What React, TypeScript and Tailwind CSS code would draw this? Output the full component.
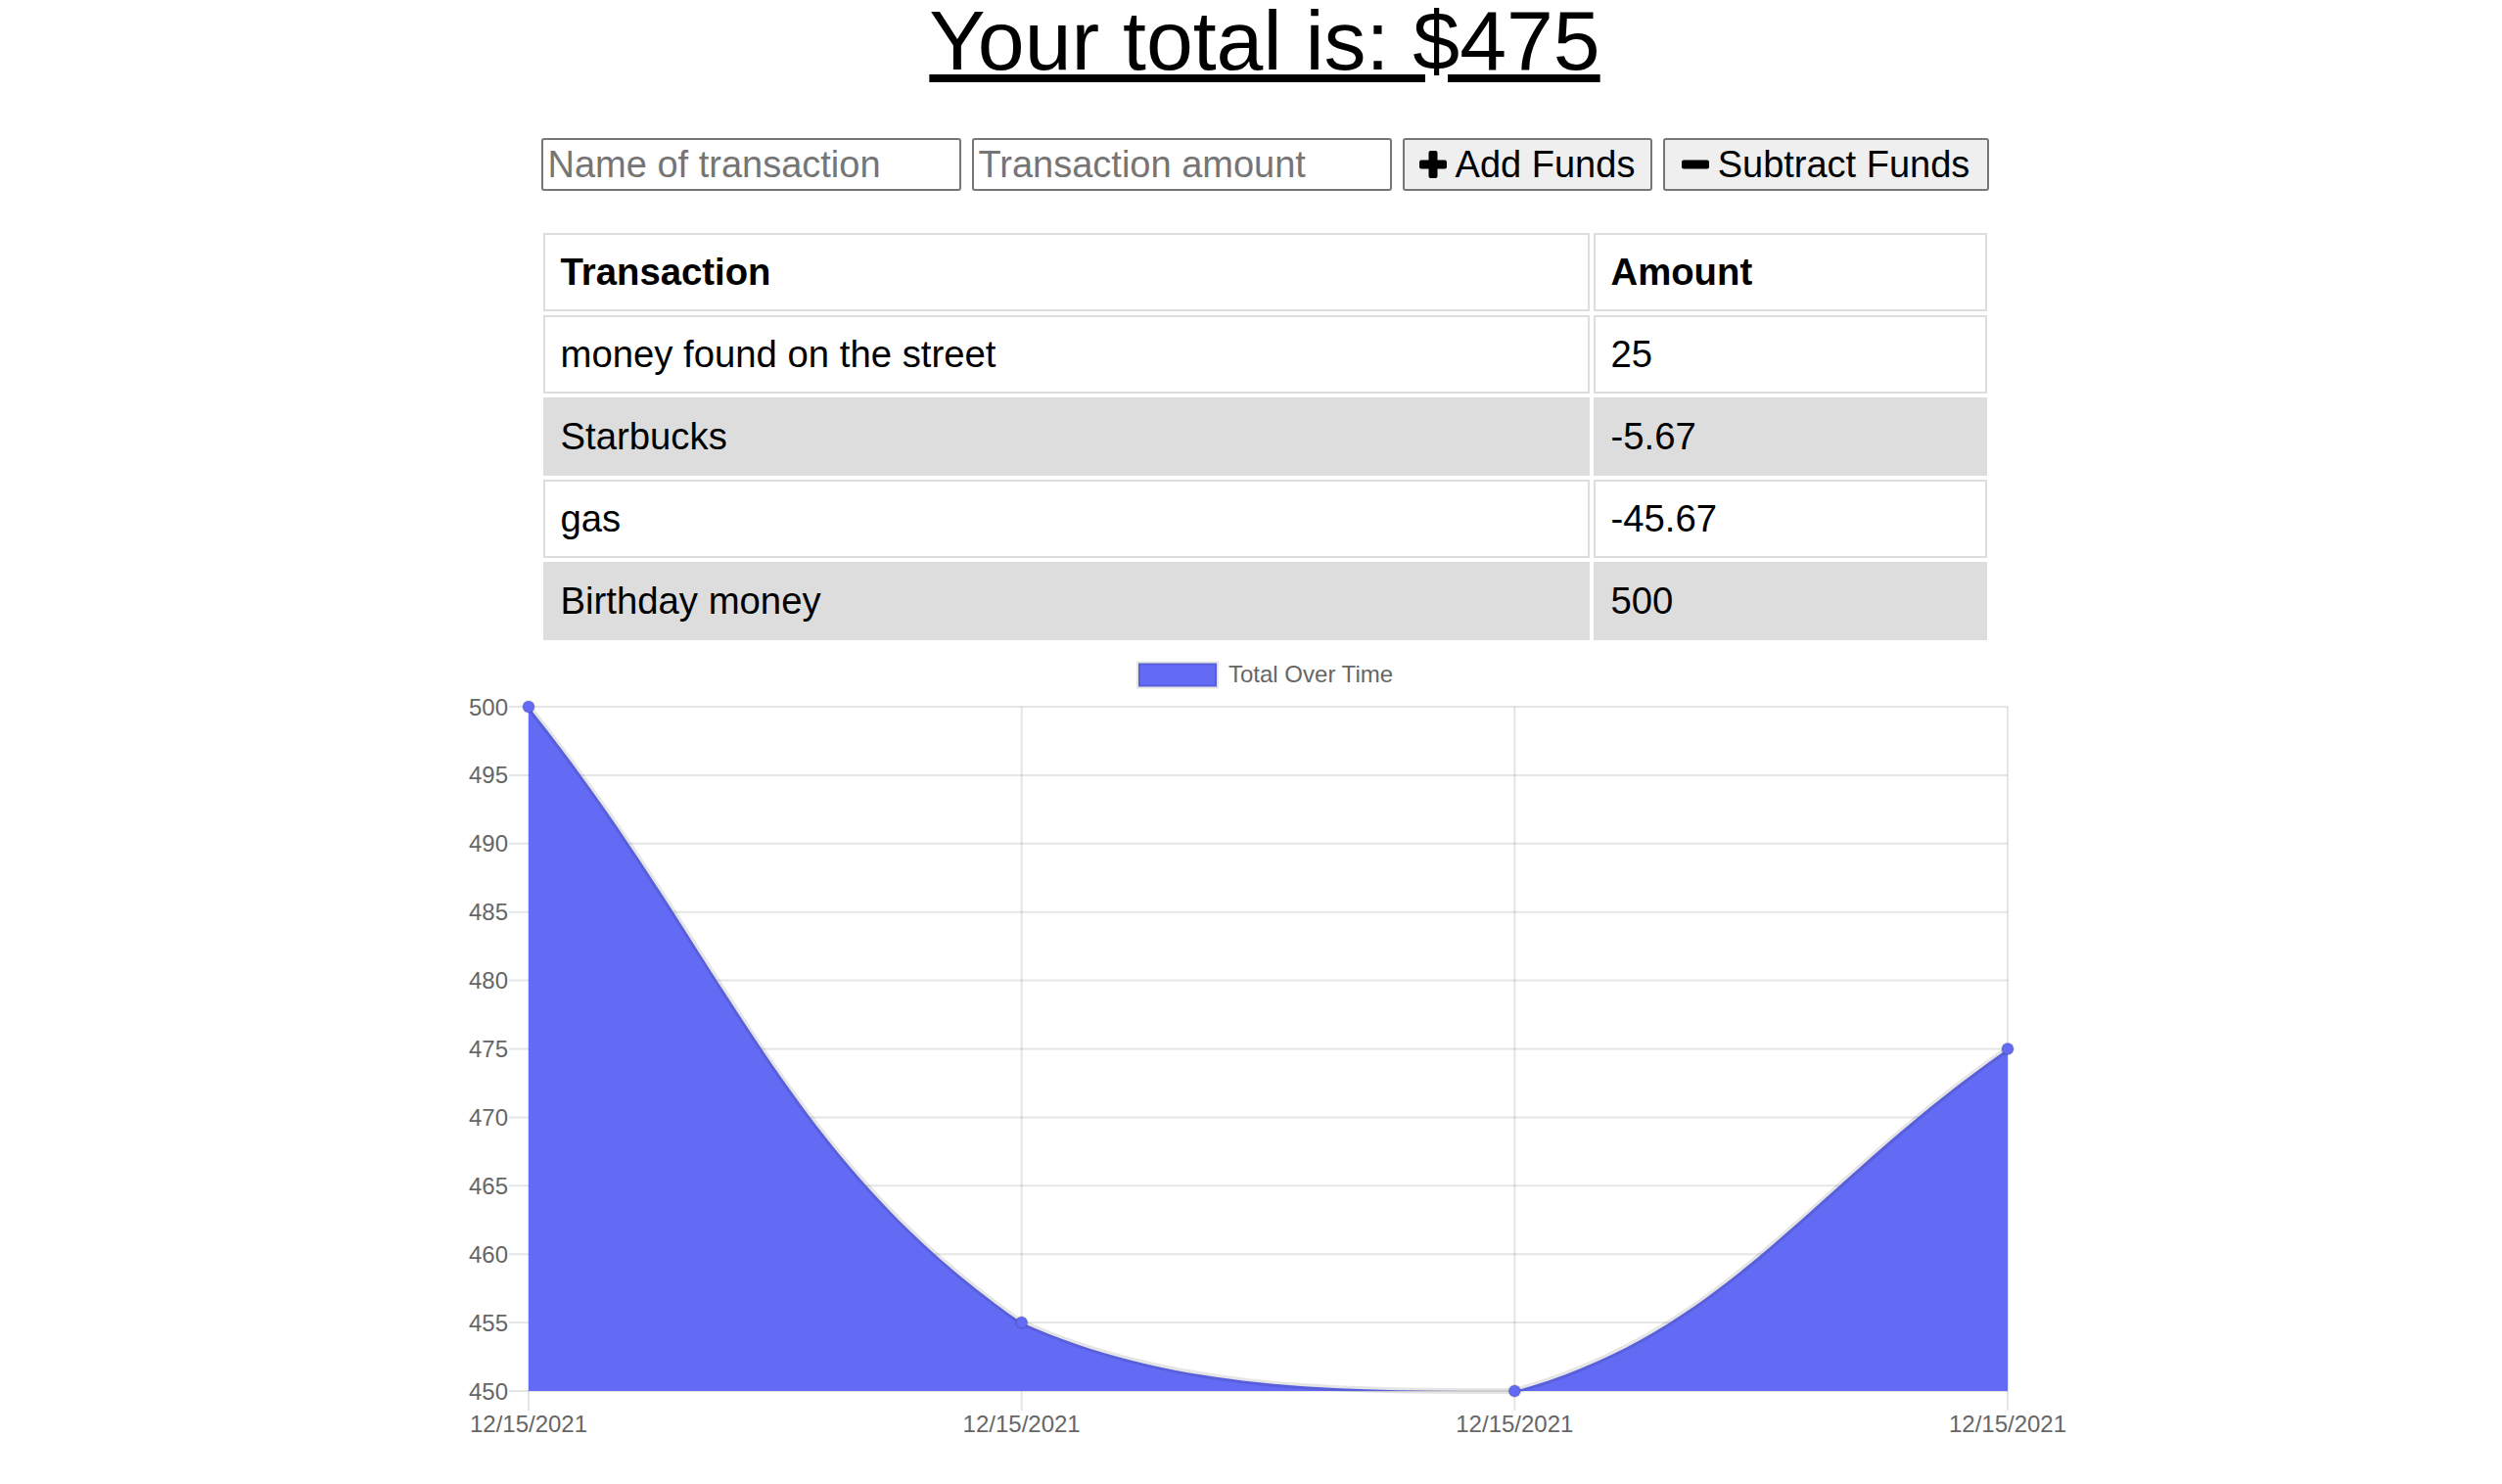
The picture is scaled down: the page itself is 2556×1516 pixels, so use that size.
import React from 'react';

const rows = [
  { name: 'money found on the street', amount: '25' },
  { name: 'Starbucks', amount: '-5.67' },
  { name: 'gas', amount: '-45.67' },
  { name: 'Birthday money', amount: '500' },
];

const values = [500, 455, 450, 475];
const xs = [540, 1043.67, 1547.33, 2051];
const yOf = (v: number) => 1421 - ((v - 450) / 5) * 69.9;
const FILL = '#636af4';
const GRID = 'rgba(0,0,0,0.1)';

const PlusIcon = () => (
  <svg viewBox="0 0 28 28" className="h-[28px] w-[28px] shrink-0" fill="currentColor">
    <rect x={9.5} y={0} width={9} height={28} rx={2} />
    <rect x={0} y={9.5} width={28} height={9} rx={2} />
  </svg>
);

const MinusIcon = () => (
  <svg viewBox="0 0 28 28" className="h-[28px] w-[28px] shrink-0" fill="currentColor">
    <rect x={0} y={9.5} width={28} height={9} rx={2} />
  </svg>
);

// chart.js style area chart, drawn in page coordinates
const Chart = () => {
  const ticks = [500, 495, 490, 485, 480, 475, 470, 465, 460, 455, 450];
  const curve =
    'M540,722 C741.5,973.6 796.7,1179.7 1043.67,1351.1 C1199.6,1421 1364.6,1421 1547.33,1421 C1767.5,1359.9 1849.5,1211.3 2051,1071.5';
  return (
    <svg width={1684} height={856} viewBox="450 660 1684 856" className="mt-[2px] block shrink-0">
      {/* legend */}
      <rect x={1163} y={677.5} width={80} height={24} fill={FILL} stroke={GRID} strokeWidth={4} />
      <text x={1255} y={697} fontSize={24} fill="#666" fontFamily="'Liberation Sans', Arial, sans-serif">
        Total Over Time
      </text>

      {/* horizontal grid + y labels */}
      {ticks.map((t) => (
        <g key={t}>
          <line x1={520} x2={2051} y1={yOf(t)} y2={yOf(t)} stroke={GRID} strokeWidth={2} />
          <text
            x={519}
            y={yOf(t) + 8.5}
            textAnchor="end"
            fontSize={24}
            fill="#666"
            fontFamily="'Liberation Sans', Arial, sans-serif"
          >
            {t}
          </text>
        </g>
      ))}

      {/* vertical grid + x labels */}
      {xs.map((x, i) => (
        <g key={i}>
          <line x1={x} x2={x} y1={722} y2={1441} stroke={GRID} strokeWidth={2} />
          <text
            x={x}
            y={1463}
            textAnchor="middle"
            fontSize={24}
            fill="#666"
            fontFamily="'Liberation Sans', Arial, sans-serif"
          >
            12/15/2021
          </text>
        </g>
      ))}

      {/* area */}
      <path d={`${curve} L2051,1421 L540,1421 Z`} fill={FILL} />
      <path d={curve} fill="none" stroke={GRID} strokeWidth={6} />

      {values.map((v, i) => (
        <circle key={i} cx={xs[i]} cy={yOf(v)} r={6} fill={FILL} stroke={GRID} strokeWidth={2} />
      ))}
    </svg>
  );
};

export default function App() {
  const inputCls =
    "h-[54px] w-[429px] rounded-[3px] border-2 border-[#767676] bg-white px-[5px] text-[38px] text-black placeholder:text-[#757575] outline-none";
  const btnCls =
    "flex h-[54px] items-center justify-center gap-[9px] rounded-[3px] border-2 border-[#767676] bg-[#efefef] text-[38px] text-black";
  const cell = 'border-2 border-[#dddddd] px-[16px] py-[15px] text-left leading-[46px]';

  return (
    <div className="min-h-screen w-full bg-white pl-[28px] font-['Liberation_Sans',Arial,sans-serif] text-black">
      <div className="flex flex-col items-center pt-[4px]">
        <h1 className="m-0 text-[86px] font-normal leading-[74px] underline">Your total is: $475</h1>

        <div className="mt-[63px] flex gap-[11px]">
          <input className={inputCls} placeholder="Name of transaction" />
          <input className={inputCls} placeholder="Transaction amount" />
          <button className={`${btnCls} w-[255px]`}>
            <PlusIcon />
            Add Funds
          </button>
          <button className={`${btnCls} w-[333px]`}>
            <MinusIcon />
            Subtract Funds
          </button>
        </div>

        <table className="mt-[39px] w-[1483px] table-fixed border-separate border-spacing-[4px] text-[38.3px]">
          <thead>
            <tr>
              <th className={`${cell} w-[1069px] font-bold`}>Transaction</th>
              <th className={`${cell} font-bold`}>Amount</th>
            </tr>
          </thead>
          <tbody>
            {rows.map((r, i) => {
              const bg = i % 2 === 1 ? 'bg-[#dddddd]' : 'bg-white';
              return (
                <tr key={i}>
                  <td className={`${cell} ${bg}`}>{r.name}</td>
                  <td className={`${cell} ${bg}`}>{r.amount}</td>
                </tr>
              );
            })}
          </tbody>
        </table>

        <Chart />
      </div>
    </div>
  );
}
